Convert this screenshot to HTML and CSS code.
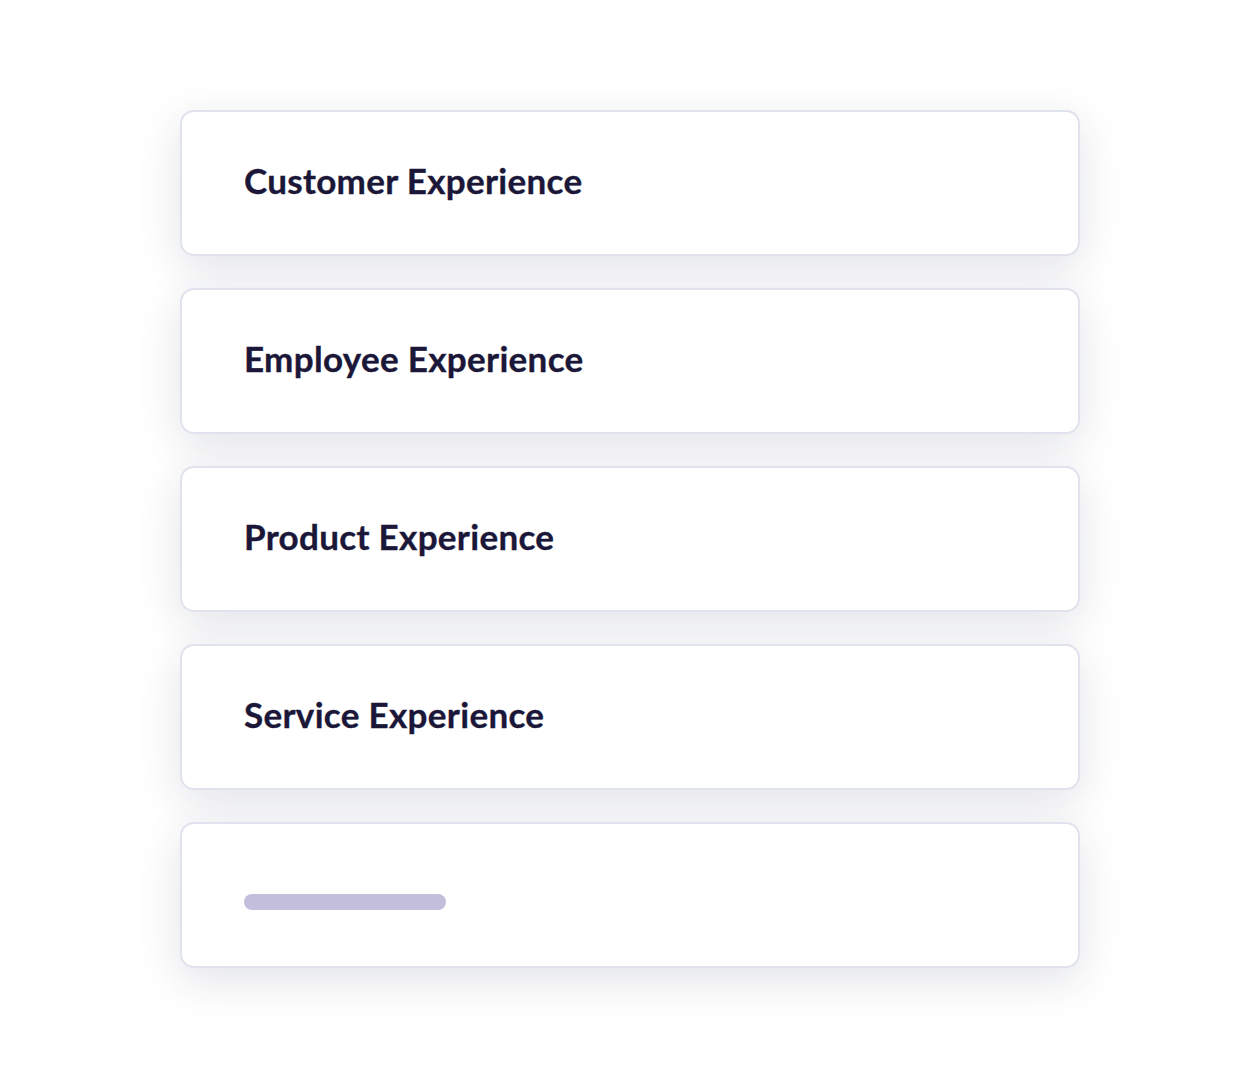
FILE: index.html
```html
<!DOCTYPE html>
<html lang="en">
<head>
<meta charset="utf-8">
<title>Experiences</title>
<link rel="stylesheet" href="styles.css">
</head>
<body>
<main class="stack">
  <div class="card"><h2 class="card-title">Customer Experience</h2></div>
  <div class="card"><h2 class="card-title">Employee Experience</h2></div>
  <div class="card"><h2 class="card-title">Product Experience</h2></div>
  <div class="card"><h2 class="card-title">Service Experience</h2></div>
  <div class="card card-loading"><span class="placeholder-bar"></span></div>
</main>
</body>
</html>
```
FILE: styles.css
```css
html, body {
  margin: 0;
  padding: 0;
  background: #ffffff;
}

body {
  width: 1260px;
  height: 1078px;
  overflow: hidden;
}

.stack {
  width: 900px;
  margin: 110px 0 0 180px;
  display: flex;
  flex-direction: column;
  gap: 32px;
}

.card {
  box-sizing: border-box;
  height: 146px;
  padding: 0 0 6px 62px;
  background: #ffffff;
  border: 2px solid #e0e2ee;
  border-radius: 14px;
  box-shadow: 0 12px 44px rgba(30, 36, 70, 0.13);
  display: flex;
  align-items: center;
}

.card-title {
  margin: 0;
  font-family: Lato, "Open Sans", sans-serif;
  font-weight: 700;
  font-size: 35px;
  color: #1b1738;
  letter-spacing: 0.32px;
  -webkit-text-stroke: 0.35px #1b1738;
}

.card-loading {
  align-items: flex-start;
  padding-top: 70px;
}

.placeholder-bar {
  display: block;
  width: 202px;
  height: 16px;
  border-radius: 8px;
  background: #c3bedc;
}
```
